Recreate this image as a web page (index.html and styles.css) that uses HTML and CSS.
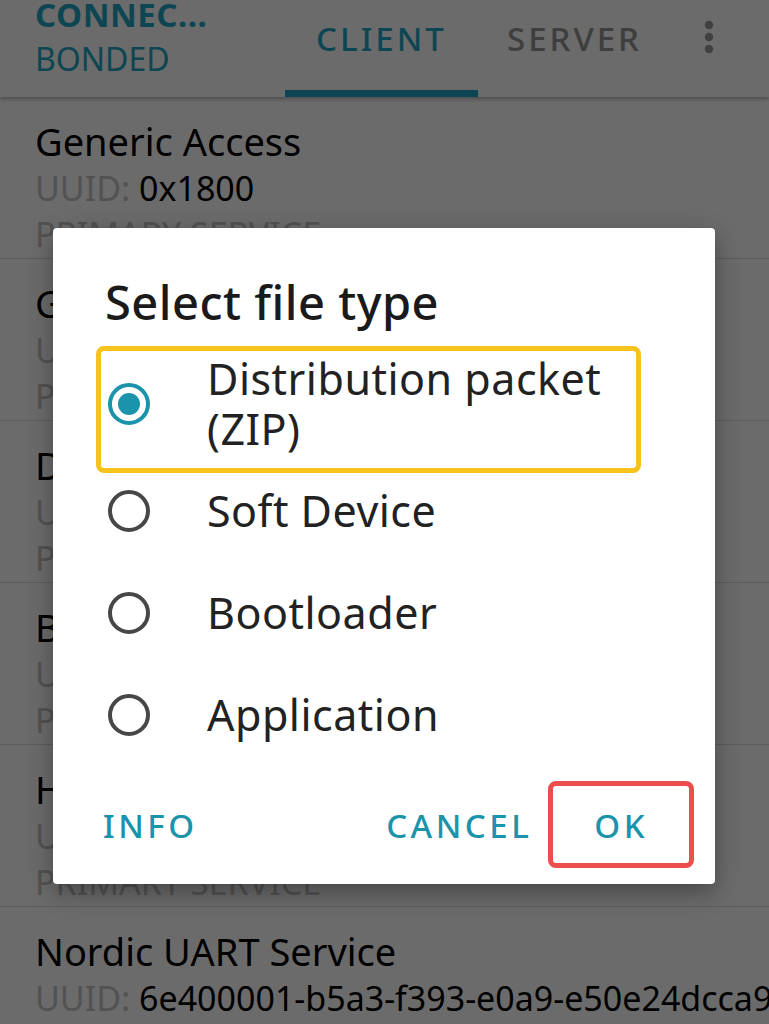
FILE: index.html
```html
<!DOCTYPE html>
<html lang="en">

<head>
    <meta charset="UTF-8">
    <meta name="viewport" content="width=device-width, initial-scale=1.0">
    <title>nRF Connect - Select file type</title>
    <link rel="stylesheet" href="styles.css">
</head>

<body>
    <div class="screen">
        <header class="appbar">
            <div class="device">
                <div class="device-name">CONNEC...</div>
                <div class="device-state">BONDED</div>
            </div>
            <nav class="tabs">
                <div class="tab active">CLIENT</div>
                <div class="tab">SERVER</div>
            </nav>
            <div class="menu">
                <svg width="10" height="34" viewBox="0 0 10 34">
                    <circle cx="5" cy="5" r="4.2" />
                    <circle cx="5" cy="17" r="4.2" />
                    <circle cx="5" cy="29" r="4.2" />
                </svg>
            </div>
        </header>

        <ul class="services">
            <li class="service">
                <div class="service-name">Generic Access</div>
                <div class="service-uuid"><span class="label">UUID:</span> 0x1800</div>
                <div class="service-type">PRIMARY SERVICE</div>
            </li>
            <li class="service">
                <div class="service-name">Generic Attribute</div>
                <div class="service-uuid"><span class="label">UUID:</span> 0x1801</div>
                <div class="service-type">PRIMARY SERVICE</div>
            </li>
            <li class="service">
                <div class="service-name">Device Information</div>
                <div class="service-uuid"><span class="label">UUID:</span> 0x180A</div>
                <div class="service-type">PRIMARY SERVICE</div>
            </li>
            <li class="service">
                <div class="service-name">Battery Service</div>
                <div class="service-uuid"><span class="label">UUID:</span> 0x180F</div>
                <div class="service-type">PRIMARY SERVICE</div>
            </li>
            <li class="service">
                <div class="service-name">Heart Rate</div>
                <div class="service-uuid"><span class="label">UUID:</span> 0x180D</div>
                <div class="service-type">PRIMARY SERVICE</div>
            </li>
            <li class="service">
                <div class="service-name">Nordic UART Service</div>
                <div class="service-uuid"><span class="label">UUID:</span> 6e400001-b5a3-f393-e0a9-e50e24dcca9e</div>
                <div class="service-type">PRIMARY SERVICE</div>
            </li>
        </ul>

        <div class="scrim"></div>

        <div class="dialog">
            <h2 class="dialog-title">Select file type</h2>

            <div class="options">
                <div class="option">
                    <span class="radio checked"></span>
                    <span class="option-label">Distribution packet<br>(ZIP)</span>
                </div>
                <div class="option">
                    <span class="radio"></span>
                    <span class="option-label">Soft Device</span>
                </div>
                <div class="option">
                    <span class="radio"></span>
                    <span class="option-label">Bootloader</span>
                </div>
                <div class="option">
                    <span class="radio"></span>
                    <span class="option-label">Application</span>
                </div>
            </div>

            <div class="dialog-actions">
                <button class="action info">INFO</button>
                <button class="action">CANCEL</button>
                <button class="action">OK</button>
            </div>

            <!-- annotation boxes -->
            <div class="mark mark-yellow"></div>
            <div class="mark mark-red"></div>
        </div>
    </div>
</body>

</html>
```

FILE: styles.css
```css
/* Page */

body {
    margin: 0;
    padding: 0;
    font-family: "Noto Sans", Roboto, sans-serif;
    background: #fff;
}

.screen {
    position: relative;
    width: 769px;
    height: 1024px;
    overflow: hidden;
    background: #fff;
}
/* App bar */

.appbar {
    position: relative;
    z-index: 1;
    display: flex;
    height: 97px;
    background: #fff;
    box-shadow: 0 2px 4px rgba(0, 0, 0, 0.3);
}

.device {
    width: 250px;
    padding-left: 35px;
    color: #1fa8c4;
}

.device-name {
    margin-top: -4px;
    font-size: 33px;
    font-weight: 700;
    letter-spacing: 0.5px;
    line-height: 38px;
}

.device-state {
    margin-top: 6px;
    font-size: 32px;
    line-height: 38px;
}

.tabs {
    display: flex;
}

.tab {
    box-sizing: border-box;
    width: 193px;
    height: 97px;
    padding-top: 19px;
    text-align: center;
    font-size: 33px;
    font-weight: 500;
    letter-spacing: 3px;
    line-height: 40px;
    color: #949494;
}

.tab.active {
    color: #1fa8c4;
    border-bottom: 7px solid #1fa8c4;
}

.menu {
    padding: 20px 0 0 33px;
}

.menu svg {
    fill: #999;
}
/* Services list */

.services {
    list-style: none;
    margin: 0;
    padding: 0;
}

.service {
    padding: 20px 35px 1px;
    border-bottom: 1px solid #dcdcdc;
    font-size: 34px;
    line-height: 46px;
    white-space: nowrap;
}

.service-name {
    font-size: 38px;
    line-height: 48px;
    color: #000;
}

.service-uuid {
    color: #000;
}

.label,
.service-type {
    color: #c4c4c4;
}
/* Dialog */

.scrim {
    position: absolute;
    top: 0;
    left: 0;
    right: 0;
    bottom: 0;
    z-index: 2;
    background: rgba(0, 0, 0, 0.58);
}

.dialog {
    position: absolute;
    z-index: 3;
    top: 228px;
    left: 53px;
    width: 662px;
    background: #fff;
    border-radius: 4px;
    box-shadow: 0 8px 24px rgba(0, 0, 0, 0.35);
}

.dialog-title {
    margin: 0;
    padding: 46px 52px 0;
    font-size: 47px;
    font-weight: 500;
    letter-spacing: 0.5px;
    line-height: 56px;
    color: #1a1a1a;
}

.options {
    margin-top: 18px;
}

.option {
    box-sizing: border-box;
    display: flex;
    align-items: center;
    min-height: 102px;
    padding: 6px 0 6px 55px;
}

.radio {
    position: relative;
    flex: none;
    box-sizing: border-box;
    width: 42px;
    height: 42px;
    border: 4.5px solid #474747;
    border-radius: 50%;
}

.radio.checked {
    border-color: #1b93aa;
}

.radio.checked::after {
    content: "";
    position: absolute;
    top: 5.5px;
    left: 5.5px;
    width: 22px;
    height: 22px;
    border-radius: 50%;
    background: #1b93aa;
}

.option-label {
    margin-left: 57px;
    font-size: 43px;
    letter-spacing: 0.5px;
    line-height: 50px;
    color: #222;
}
/* Buttons */

.dialog-actions {
    display: flex;
    gap: 38px;
    margin-top: 40px;
    padding: 0 55px 38px 38px;
}

.action {
    padding: 0 12px;
    background: none;
    border: none;
    font-family: "Noto Sans", Roboto, sans-serif;
    font-size: 33px;
    font-weight: 500;
    letter-spacing: 3.5px;
    line-height: 40px;
    color: #1b93aa;
}

.action.info {
    margin-right: auto;
}
/* Annotation boxes */

.mark {
    position: absolute;
    box-sizing: border-box;
    border-radius: 8px;
}

.mark-yellow {
    top: 118px;
    left: 43px;
    width: 545px;
    height: 127px;
    border: 5px solid #f7c21b;
}

.mark-red {
    top: 553px;
    left: 495px;
    width: 146px;
    height: 87px;
    border: 5px solid #ec4d4d;
}
```
